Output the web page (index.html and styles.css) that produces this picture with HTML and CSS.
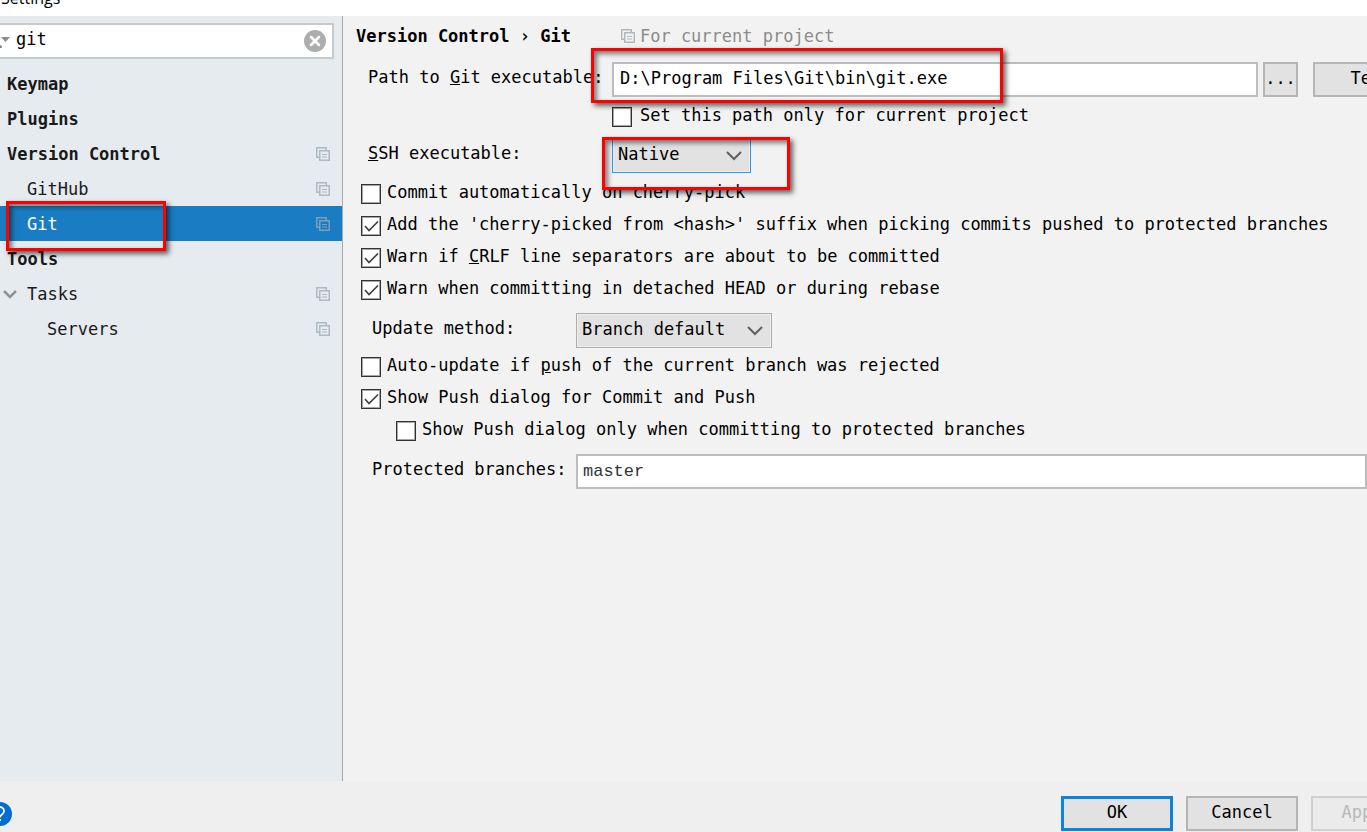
FILE: index.html
```html
<!DOCTYPE html>
<html lang="en">
<head>
    <meta charset="UTF-8">
    <meta name="viewport" content="width=device-width, initial-scale=1.0">
    <title>Settings</title>
    <link rel="stylesheet" href="styles.css">
</head>
<body>
    <!-- Shared icons -->
    <svg class="sprite" aria-hidden="true">
        <symbol id="icon-project" viewBox="0 0 14 14">
            <path d="M0 0h11v3H9.500V1.500h-8v8H3V11H0z" fill="currentColor"/>
            <path d="M3 3h11v11H3zM4.500 4.500v8h8v-8z" fill="currentColor" fill-rule="evenodd"/>
            <path d="M6 7.500h5M6 10h5" stroke="currentColor" stroke-width="1.200"/>
        </symbol>
    </svg>

    <header class="titlebar"><span>Settings</span></header>

    <div class="main">
        <aside class="sidebar">
            <div class="search">
                <svg class="search-arrow" viewBox="0 0 12 14" aria-hidden="true">
                    <path d="M1 3h9L5.500 8z" fill="#8c8c8c"/>
                    <circle cx="0" cy="13" r="2" fill="#8c8c8c"/>
                </svg>
                <input type="text" value="git" aria-label="Search settings">
                <button class="clear" aria-label="Clear search">
                    <svg viewBox="0 0 22 22">
                        <circle cx="11" cy="11" r="11" fill="#adadad"/>
                        <path d="M7 7l8 8M15 7l-8 8" stroke="#fff" stroke-width="2.500" stroke-linecap="round"/>
                    </svg>
                </button>
            </div>

            <ul class="tree">
                <li><a href="#keymap" class="group">Keymap</a></li>
                <li><a href="#plugins" class="group">Plugins</a></li>
                <li><a href="#vcs" class="group">Version Control <svg class="icon"><use href="#icon-project"/></svg></a></li>
                <li><a href="#github" class="child">GitHub <svg class="icon"><use href="#icon-project"/></svg></a></li>
                <li class="marked">
                    <a href="#git" class="child selected">Git <svg class="icon"><use href="#icon-project"/></svg></a>
                    <span class="highlight highlight-tree"></span>
                </li>
                <li><a href="#tools" class="group">Tools</a></li>
                <li>
                    <a href="#tasks" class="parent">
                        <svg class="toggle" viewBox="0 0 16 16"><path d="M2 5l6 6 6-6" fill="none" stroke="#8f9396" stroke-width="2.500"/></svg>
                        Tasks <svg class="icon"><use href="#icon-project"/></svg>
                    </a>
                </li>
                <li><a href="#servers" class="grandchild">Servers <svg class="icon"><use href="#icon-project"/></svg></a></li>
            </ul>
        </aside>

        <main class="content">
            <div class="breadcrumb">
                <h1>Version Control › Git</h1>
                <span class="scope"><svg class="icon"><use href="#icon-project"/></svg>For current project</span>
            </div>

            <div class="row path-row">
                <label for="path">Path to <u>G</u>it executable:</label>
                <div class="marked path-field">
                    <input type="text" id="path" value="D:\Program Files\Git\bin\git.exe">
                    <span class="highlight highlight-path"></span>
                </div>
                <button class="browse">...</button>
                <button class="test">Test</button>
            </div>
            <label class="check check-path"><input type="checkbox"><span>Set this path only for current project</span></label>

            <div class="row ssh-row">
                <label for="ssh"><u>S</u>SH executable:</label>
                <div class="marked">
                    <select id="ssh" class="focused"><option>Native</option><option>Built-in</option></select>
                    <span class="highlight highlight-ssh"></span>
                </div>
            </div>

            <div class="checks">
                <label class="check"><input type="checkbox"><span>Commit automatically on cherry-pick</span></label>
                <label class="check"><input type="checkbox" checked><span>Add the 'cherry-picked from &lt;hash&gt;' suffix when picking commits pushed to protected branches</span></label>
                <label class="check"><input type="checkbox" checked><span>Warn if <u>C</u>RLF line separators are about to be committed</span></label>
                <label class="check"><input type="checkbox" checked><span>Warn when committing in detached HEAD or during rebase</span></label>
            </div>

            <div class="row option-row">
                <label for="update">Update method:</label>
                <select id="update"><option>Branch default</option><option>Merge</option><option>Rebase</option></select>
            </div>

            <div class="checks">
                <label class="check"><input type="checkbox"><span>Auto-update if <u>p</u>ush of the current branch was rejected</span></label>
                <label class="check"><input type="checkbox" checked><span>Show Push dialog for Commit and Push</span></label>
                <label class="check nested"><input type="checkbox"><span>Show Push dialog only when committing to protected branches</span></label>
            </div>

            <div class="row option-row">
                <label for="protected">Protected branches:</label>
                <input type="text" id="protected" value="master">
            </div>
        </main>
    </div>

    <footer class="footer">
        <button class="help" aria-label="Help">
            <svg viewBox="0 0 24 24">
                <circle cx="12" cy="12" r="12" fill="#006dd2"/>
                <path d="M8 9a4 4 0 1 1 6 3.500c-1.500 1-2 1.500-2 3M12 17v2" fill="none" stroke="#fff" stroke-width="1.800"/>
            </svg>
        </button>
        <div class="actions">
            <button class="primary">OK</button>
            <button>Cancel</button>
            <button disabled>Apply</button>
        </div>
    </footer>
</body>
</html>
```
FILE: styles.css
```css
* {
    margin: 0;
    padding: 0;
    box-sizing: border-box;
}

body {
    display: flex;
    flex-direction: column;
    height: 100vh;
    overflow: hidden;
    background-color: #efefef;
    color: #000;
    font-family: "DejaVu Sans Mono", monospace;
    font-size: 17px;
    line-height: 20px;
}

input, select, button {
    font: inherit;
    color: inherit;
}

svg {
    display: block;
}

.sprite {
    position: absolute;
    width: 0;
    height: 0;
}

/* Title bar */
.titlebar {
    display: flex;
    align-items: flex-end;
    height: 16px;
    padding: 0 0 8px 1px;
    background-color: #fff;
    font-family: "Open Sans", sans-serif;
    font-size: 16px;
}

.main {
    display: flex;
    flex: 1;
    min-height: 0;
}

/* Sidebar */
.sidebar {
    flex: 0 0 343px;
    padding-top: 7px;
    background-color: #e5ebef;
    border-right: 1px solid #a9a9a9;
}

.search {
    display: flex;
    align-items: center;
    height: 36px;
    margin: 0 8px 7px -2px;
    padding-right: 6px;
    border: 2px solid #c4cacd;
    background-color: #fff;
}

.search-arrow {
    width: 12px;
    height: 14px;
}

.search input {
    flex: 1;
    min-width: 0;
    height: 28px;
    padding: 0 4px 4px;
    border: 0;
    outline: 0;
}

.clear {
    width: 22px;
    height: 22px;
    border: 0;
    background: none;
}

.tree {
    list-style: none;
}

.tree a {
    display: flex;
    align-items: center;
    height: 35px;
    padding-right: 12px;
    color: #1a1a1a;
    text-decoration: none;
}

.tree .group {
    padding-left: 7px;
    font-weight: bold;
}

.tree .child {
    padding-left: 27px;
}

.tree .parent {
    padding-left: 2px;
}

.tree .grandchild {
    padding-left: 47px;
}

.tree .selected {
    background-color: #1a7dc4;
    color: #fff;
}

.toggle {
    width: 16px;
    height: 16px;
    margin-right: 9px;
}

.icon {
    width: 14px;
    height: 14px;
    color: #aeb9c0;
}

.tree .icon {
    margin-left: auto;
}

.selected .icon {
    color: #7f9fb8;
}

/* Content */
.content {
    flex: 1;
    min-width: 0;
    padding: 10px 0 0 18px;
    background-color: #f2f2f2;
    overflow: hidden;
}

.breadcrumb {
    display: flex;
    align-items: center;
    margin: 0 0 16px -5px;
}

h1 {
    font-size: 17px;
}

.scope {
    display: flex;
    align-items: center;
    gap: 5px;
    margin-left: 50px;
    color: #8c8c8c;
}

.row {
    display: flex;
    align-items: center;
}

.row label {
    flex: none;
    padding-bottom: 6px;
}

.path-row label, .ssh-row label {
    width: 251px;
    padding-left: 7px;
}

.option-row label {
    width: 215px;
    padding-left: 11px;
}

.row input {
    flex: 1;
    width: 100%;
    min-width: 0;
    height: 35px;
    padding: 0 6px 4px;
    border: 2px solid #bdbdbd;
    background-color: #fff;
    outline: 0;
}

#protected {
    padding: 0 5px;
    color: #333;
    font-family: "Liberation Mono", monospace;
}

/* The Test button runs past the window edge */
.path-row {
    margin-right: -62px;
}

.path-field {
    flex: 1;
    display: flex;
}

button {
    border: 2px solid #b5b5b5;
    background-color: #e2e2e2;
}

.browse, .test {
    height: 35px;
    padding-bottom: 4px;
}

.browse {
    width: 35px;
    margin: 0 15px 0 5px;
}

.test {
    width: 116px;
}

select {
    display: block;
    width: 196px;
    height: 35px;
    padding: 0 30px 3px 5px;
    border: 1px solid #adadad;
    border-radius: 0;
    outline: 0;
    box-shadow: inset 0 0 0 1px #eee;
    appearance: none;
    background: #e2e2e2 url("data:image/svg+xml,%3Csvg xmlns='http://www.w3.org/2000/svg' width='16' height='10'%3E%3Cpath d='M1 1l7 7 7-7' fill='none' stroke='%23606060' stroke-width='2'/%3E%3C/svg%3E") no-repeat right 8px center;
}

select.focused {
    width: 139px;
    border-color: #3399e6;
}

.check {
    display: flex;
    align-items: center;
    gap: 6px;
    height: 20px;
    white-space: nowrap;
}

.check span {
    padding-bottom: 4px;
}

.check input {
    flex: none;
    width: 20px;
    height: 20px;
    border: 1px solid #333;
    box-shadow: inset 0 0 0 1px #a6a6a6;
    background: #fff center no-repeat;
    appearance: none;
}

.check input:checked {
    background-image: url("data:image/svg+xml,%3Csvg xmlns='http://www.w3.org/2000/svg' width='18' height='18'%3E%3Cpath d='M3 9l4 4.500 9-9' fill='none' stroke='%23404040' stroke-width='1.700'/%3E%3C/svg%3E");
}

.check-path {
    margin: 10px 0 11px 251px;
    gap: 8px;
}

.ssh-row {
    margin-bottom: 11px;
}

.checks {
    display: flex;
    flex-direction: column;
    gap: 12px;
}

.checks + .option-row {
    margin: 13px 0 9px;
}

.nested {
    margin-left: 35px;
}

/* Red callout frames */
.marked {
    position: relative;
}

.highlight {
    position: absolute;
    z-index: 1;
    border: 3px solid #f00;
    box-shadow: 3px 3px 5px rgba(0, 0, 0, 0.6), inset 3px 3px 5px rgba(0, 0, 0, 0.5);
    pointer-events: none;
}

.highlight-tree {
    top: -5px;
    left: 6px;
    width: 160px;
    height: 50px;
}

.highlight-path {
    top: -14px;
    left: -21px;
    width: 412px;
    height: 55px;
}

.highlight-ssh {
    top: -1px;
    left: -10px;
    width: 188px;
    height: 53px;
}

/* Footer */
.footer {
    display: flex;
    justify-content: space-between;
    align-items: center;
    height: 51px;
    padding-top: 14px;
}

.help {
    width: 24px;
    height: 24px;
    margin-left: -12px;
    border: 0;
    background: none;
}

.actions {
    display: flex;
    gap: 13px;
    margin-right: -56px;
}

.actions button {
    width: 112px;
    height: 35px;
    padding-bottom: 4px;
}

.actions .primary {
    border: 3px solid #0a84dd;
}

.actions button:disabled {
    border-color: #d0d0d0;
    background-color: #ebebeb;
    color: #b8b8b8;
}
```
